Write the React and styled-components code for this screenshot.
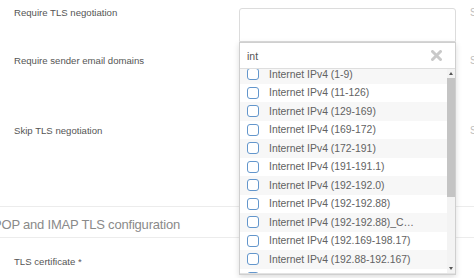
import styled, { createGlobalStyle } from 'styled-components';

const networks = [
    'Internet IPv4 (1-9)',
    'Internet IPv4 (11-126)',
    'Internet IPv4 (129-169)',
    'Internet IPv4 (169-172)',
    'Internet IPv4 (172-191)',
    'Internet IPv4 (191-191.1)',
    'Internet IPv4 (192-192.0)',
    'Internet IPv4 (192-192.88)',
    'Internet IPv4 (192-192.88)_C\u2026',
    'Internet IPv4 (192.169-198.17)',
    'Internet IPv4 (192.88-192.167)',
    'Internet IPv4 (198.20-223)',
];

function ClearIcon(){
    return (
        <svg width="11" height="11" viewBox="0 0 11 11">
            <path d="M1.5 1.5 L9.5 9.5 M9.5 1.5 L1.5 9.5" stroke="#c9c9c9" strokeWidth="3" strokeLinecap="round" />
        </svg>
    )
}

function NetworkDropdown(){
    return(
        <DropdownContainer>
            <SearchRow>
                <SearchText>int</SearchText>
                <ClearIcon />
            </SearchRow>
            <ListArea>
                <ListViewport>
                    <ListInner>
                        {networks.map((name, i) => (
                            <Option key={i} $shaded={i % 2 === 0}>
                                <Checkbox />
                                <OptionText>{name}</OptionText>
                            </Option>
                        ))}
                    </ListInner>
                </ListViewport>
                <Scrollbar>
                    <Arrow $up />
                    <ScrollTrack>
                        <ScrollThumb />
                    </ScrollTrack>
                    <Arrow />
                </Scrollbar>
            </ListArea>
        </DropdownContainer>
    )
}

export default function App(){
    return(
        <>
            <GlobalStyle />
            <Page>
                <Row $height={48}>
                    <Label>Require TLS negotiation</Label>
                    <Field>
                        <SelectBox />
                        <NetworkDropdown />
                    </Field>
                    <Hint>Se</Hint>
                </Row>
                <Row $height={70}>
                    <Label>Require sender email domains</Label>
                    <Field />
                    <Hint>Se</Hint>
                </Row>
                <Row $height={88}>
                    <Label>Skip TLS negotiation</Label>
                    <Field />
                    <Hint>Se</Hint>
                </Row>
                <SectionHeader>
                    <SectionTitle>POP and IMAP TLS configuration</SectionTitle>
                </SectionHeader>
                <Row $height={60} $top={17}>
                    <Label>TLS certificate *</Label>
                    <Field />
                </Row>
            </Page>
        </>
    )
}

const GlobalStyle = createGlobalStyle`
    html, body {
        margin: 0;
        padding: 0;
        background: #ffffff;
        overflow: hidden;
    }
    body {
        font-family: "Liberation Sans", Arial, sans-serif;
    }
`;
const Page = styled.div`
    width: 474px;
    height: 278px;
    overflow: hidden;
    display: flex;
    flex-direction: column;
`;
const Row = styled.div`
    display: flex;
    flex-direction: row;
    align-items: flex-start;
    height: ${p => p.$height}px;
    padding-top: ${p => p.$top ?? 6}px;
    box-sizing: border-box;
    flex-shrink: 0;
`;
const Label = styled.span`
    width: 239px;
    padding-left: 14px;
    box-sizing: border-box;
    font-size: 9.6px;
    line-height: 14px;
    color: #555555;
    flex-shrink: 0;
`;
const Field = styled.div`
    position: relative;
    width: 217px;
    flex-shrink: 0;
`;
const Hint = styled.span`
    margin-left: 14px;
    font-size: 10px;
    line-height: 14px;
    color: #bdbdbd;
    white-space: nowrap;
`;
const SelectBox = styled.div`
    margin-top: 2px;
    height: 34px;
    border: 1px solid #dcdcdc;
    border-radius: 3px 3px 0 0;
    box-sizing: border-box;
    background: #fff;
`;
const DropdownContainer = styled.div`
    position: absolute;
    top: 36px;
    left: 0;
    width: 217px;
    background: #fff;
    border: 1px solid #cfcfcf;
    box-sizing: border-box;
    box-shadow: 0 2px 6px rgba(0, 0, 0, 0.14);
    z-index: 2;
`;
const SearchRow = styled.div`
    display: flex;
    align-items: center;
    justify-content: space-between;
    height: 25px;
    padding: 0 13px 0 7px;
    border-bottom: 1px solid #dedede;
`;
const SearchText = styled.span`
    font-size: 10.5px;
    color: #555;
`;
const ListArea = styled.div`
    display: flex;
    flex-direction: row;
    height: 204px;
    border-bottom: 1px solid #e2e2e2;
`;
const ListViewport = styled.div`
    flex: 1;
    overflow: hidden;
`;
const ListInner = styled.div`
    margin-top: -4px;
    display: flex;
    flex-direction: column;
`;
const Option = styled.div`
    display: flex;
    align-items: center;
    gap: 10px;
    height: 18.5px;
    padding-left: 7px;
    background: ${p => p.$shaded ? '#f7f7f7' : '#ffffff'};
`;
const Checkbox = styled.span`
    width: 12px;
    height: 12px;
    border: 1.5px solid #6396cc;
    border-radius: 3px;
    box-sizing: border-box;
    background: #fff;
    flex-shrink: 0;
`;
const OptionText = styled.span`
    font-size: 10.4px;
    color: #626262;
    white-space: nowrap;
`;
const Scrollbar = styled.div`
    width: 8px;
    display: flex;
    flex-direction: column;
    align-items: center;
    background: #f3f3f3;
`;
const Arrow = styled.span`
    width: 0;
    height: 0;
    margin: 3px 0;
    border-left: 2px solid transparent;
    border-right: 2px solid transparent;
    ${p => p.$up ? 'border-bottom: 3px solid #555;' : 'border-top: 3px solid #555;'}
`;
const ScrollTrack = styled.div`
    flex: 1;
    width: 100%;
`;
const ScrollThumb = styled.div`
    height: 119px;
    width: 100%;
    background: #c4c4c4;
`;
const SectionHeader = styled.div`
    height: 32px;
    box-sizing: border-box;
    border-top: 1px solid #ececec;
    border-bottom: 1px solid #ececec;
    padding-top: 10px;
    flex-shrink: 0;
`;
const SectionTitle = styled.div`
    margin-left: -7px;
    font-size: 13px;
    line-height: 15px;
    letter-spacing: -0.2px;
    color: #8a8a8a;
    white-space: nowrap;
`;
